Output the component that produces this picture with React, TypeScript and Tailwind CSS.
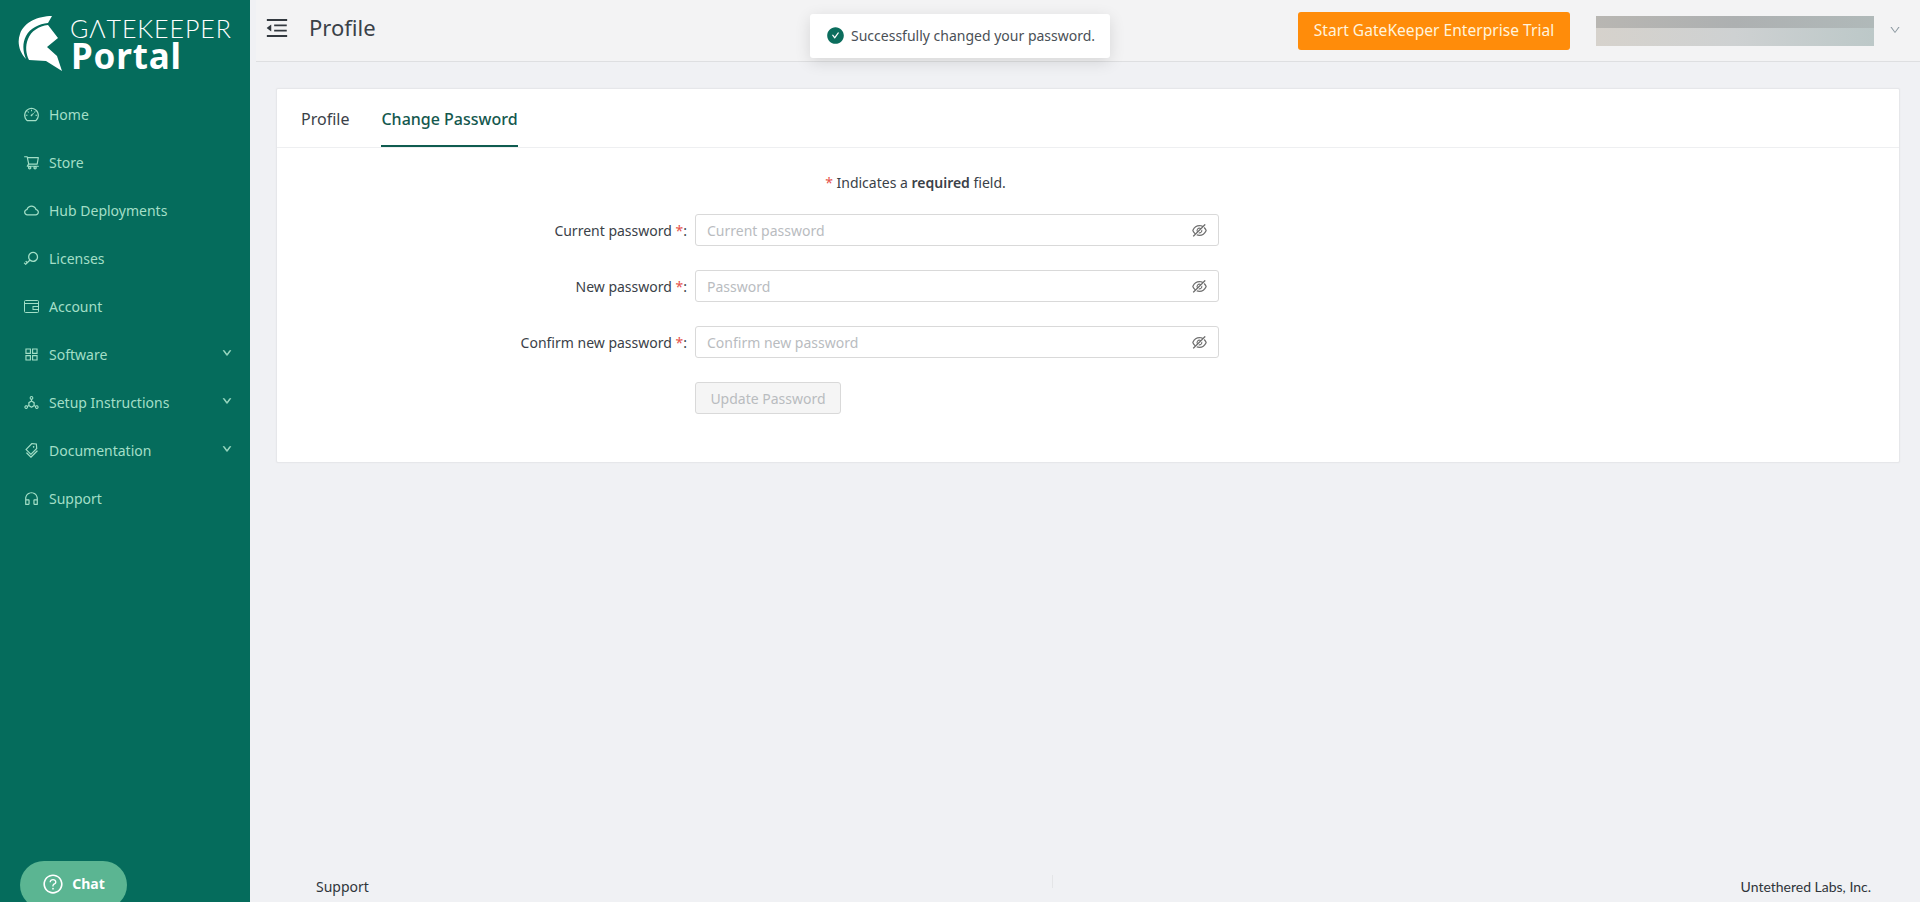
import {
  AiFillCheckCircle,
  AiOutlineAppstore,
  AiOutlineCloud,
  AiOutlineCustomerService,
  AiOutlineDashboard,
  AiOutlineDeploymentUnit,
  AiOutlineDown,
  AiOutlineEyeInvisible,
  AiOutlineKey,
  AiOutlineMenuFold,
  AiOutlineQuestionCircle,
  AiOutlineShoppingCart,
  AiOutlineTags,
} from "react-icons/ai";

function AccountIcon({ className }: { className?: string }) {
  return (
    <svg viewBox="0 0 17 17" className={className} fill="none" stroke="currentColor" strokeWidth="1">
      <rect x="1.5" y="2.5" width="14" height="12" rx="1" />
      <path d="M1.5 5.5 H15.5" />
      <rect x="10" y="8.5" width="5.5" height="3" />
    </svg>
  );
}

const NAV = [
  { label: "Home", icon: AiOutlineDashboard },
  { label: "Store", icon: AiOutlineShoppingCart },
  { label: "Hub Deployments", icon: AiOutlineCloud },
  { label: "Licenses", icon: AiOutlineKey },
  { label: "Account", icon: AccountIcon },
  { label: "Software", icon: AiOutlineAppstore, sub: true },
  { label: "Setup Instructions", icon: AiOutlineDeploymentUnit, sub: true },
  { label: "Documentation", icon: AiOutlineTags, sub: true },
  { label: "Support", icon: AiOutlineCustomerService },
];

const FIELDS = [
  { label: "Current password", placeholder: "Current password" },
  { label: "New password", placeholder: "Password" },
  { label: "Confirm new password", placeholder: "Confirm new password" },
];

function Logo() {
  return (
    <div className="flex h-[84px] items-start pl-[18px] pt-[16px]">
      <svg viewBox="0 0 44 55" className="h-[55px] w-[44px] shrink-0" fill="#ffffff">
        <path d="M34 0 C20 0 6 6 2 18 C-1 26 1 36 8 43 C5 36 4 28 8 20 C12 12 21 8 30 7 Z" />
        <path d="M30 9 L40 22 L29 31 L39 40 L44 55 L28 45 L11 44 C8 38 7 30 10 23 C13 15 21 10 30 9 Z" />
      </svg>
      <div className="ml-[8px] flex flex-col">
        <span className="font-['Lato'] text-[25px] font-light leading-[25px] tracking-[0.9px] text-white">
          GΛTEKEEPER
        </span>
        <span className="mt-px pl-px font-['Noto_Sans'] text-[35px] font-bold leading-[28px] tracking-[0.8px] text-white">
          Portal
        </span>
      </div>
    </div>
  );
}

function Sidebar() {
  return (
    <aside className="relative flex h-full w-[250px] shrink-0 flex-col overflow-hidden bg-[#056c5c]">
      <Logo />
      <nav className="mt-[6px] flex flex-col">
        {NAV.map(({ label, icon: Icon, sub }) => (
          <div key={label} className="flex h-[48px] items-center pl-[23px] pr-[18px] text-[14px] text-[#a3dfc7]">
            <Icon className="h-[17px] w-[17px]" />
            <span className="ml-[9px] flex-1">{label}</span>
            {sub && <AiOutlineDown className="mt-[-2px] h-[10px] w-[10px] stroke-[80]" />}
          </div>
        ))}
      </nav>
      <div className="absolute left-[20px] top-[861px] flex h-[48px] w-[107px] items-start justify-center gap-[8px] rounded-full bg-[#5bb592] pt-[12px] text-[14px] font-bold text-white">
        <AiOutlineQuestionCircle className="h-[22px] w-[22px]" />
        <span>Chat</span>
      </div>
    </aside>
  );
}

function Header() {
  return (
    <header className="ml-[6px] flex h-[62px] shrink-0 items-center border-b border-[#dedfe1] bg-[#f3f3f4] pl-[8px]">
      <AiOutlineMenuFold className="mt-[-5px] h-[26px] w-[26px] text-[#33393f]" />
      <h1 className="ml-[19px] mt-[-6px] text-[22px] font-normal text-[#3a4148]">Profile</h1>
      <div className="ml-auto flex items-center">
        <button className="flex h-[38px] w-[272px] items-center justify-center rounded-[3px] bg-[#ff8c0a] text-[15.6px] text-[#fff3dc]">
          Start GateKeeper Enterprise Trial
        </button>
        <div className="ml-[26px] flex h-[30px] w-[278px] flex-col">
          <div className="h-[12px] bg-linear-to-r from-[#b8b6b2] via-[#adb0b1] to-[#b0b9b9]" />
          <div className="h-[18px] bg-linear-to-r from-[#d6d2cc] via-[#ced1d2] to-[#bcc8c8]" />
        </div>
        <AiOutlineDown className="ml-[15px] mr-[19px] mt-[-1px] h-[12px] w-[12px] text-[#8b98a0]" />
      </div>
    </header>
  );
}

function PasswordForm() {
  return (
    <div className="w-[1277px] pt-[25px] text-[14px] text-[#3a4148]">
      <p className="h-[20px] text-center leading-[20px]">
        <span className="text-[#e5534b]">*</span> Indicates a <span className="font-semibold">required</span> field.
      </p>
      <div className="mt-[21px] flex flex-col gap-[24px]">
        {FIELDS.map((f) => (
          <div key={f.label} className="flex h-[32px] items-center">
            <label className="w-[418px] pr-[8px] text-right">
              {f.label} <span className="text-[#e5534b]">*</span>:
            </label>
            <div className="flex h-[32px] w-[524px] items-center rounded-[3px] border border-[#d9d9d9] bg-white pl-[11px] pr-[10px]">
              <span className="flex-1 text-[#b9bcbf]">{f.placeholder}</span>
              <AiOutlineEyeInvisible className="h-[17px] w-[17px] text-[#6f6f6f]" />
            </div>
          </div>
        ))}
      </div>
      <div className="ml-[418px] mt-[24px] flex h-[32px] w-[146px] items-center justify-center rounded-[3px] border border-[#d9d9d9] bg-[#f5f5f5] text-[#b9bcbf]">
        Update Password
      </div>
    </div>
  );
}

export default function App() {
  return (
    <div className="relative flex h-[902px] w-[1920px] overflow-hidden bg-[#f0f1f4] font-['Noto_Sans',sans-serif]">
      <Sidebar />
      <main className="flex min-w-0 flex-1 flex-col">
        <Header />
        <section className="ml-[26px] mr-[20px] mt-[26px] h-[375px] rounded-[2px] border border-[#e6e7ea] bg-white shadow-[0_0_2px_rgba(0,0,0,0.04)]">
          <div className="flex h-[59px] items-stretch gap-[32px] border-b border-[#eeeff1] pl-[24px] text-[16px]">
            <div className="flex items-center pt-px text-[#3a4148]">Profile</div>
            <div className="flex items-center border-b-2 border-[#0f5c50] pt-[3px] font-medium text-[#14584e]">Change Password</div>
          </div>
          <PasswordForm />
        </section>
        <footer className="mt-auto flex h-[30px] items-start justify-between pl-[66px] pr-[49px] pt-[5px] text-[14px] leading-[20px] text-[#2f353a]">
          <span>Support</span>
          <span className="font-['Lato']">Untethered Labs, Inc.</span>
        </footer>
      </main>

      <div className="absolute left-[810px] top-[14px] flex h-[44px] w-[300px] items-center rounded-[3px] bg-white pb-[2px] pl-[16px] text-[14px] text-[#4a5056] shadow-[0_4px_16px_rgba(0,0,0,0.12)]">
        <AiFillCheckCircle className="h-[19px] w-[19px] text-[#0b6d5d]" />
        <span className="ml-[6px]">Successfully changed your password.</span>
      </div>
      <div className="absolute left-[1052px] top-[875px] h-[13px] w-px bg-[#e4e5e7]" />
    </div>
  );
}
